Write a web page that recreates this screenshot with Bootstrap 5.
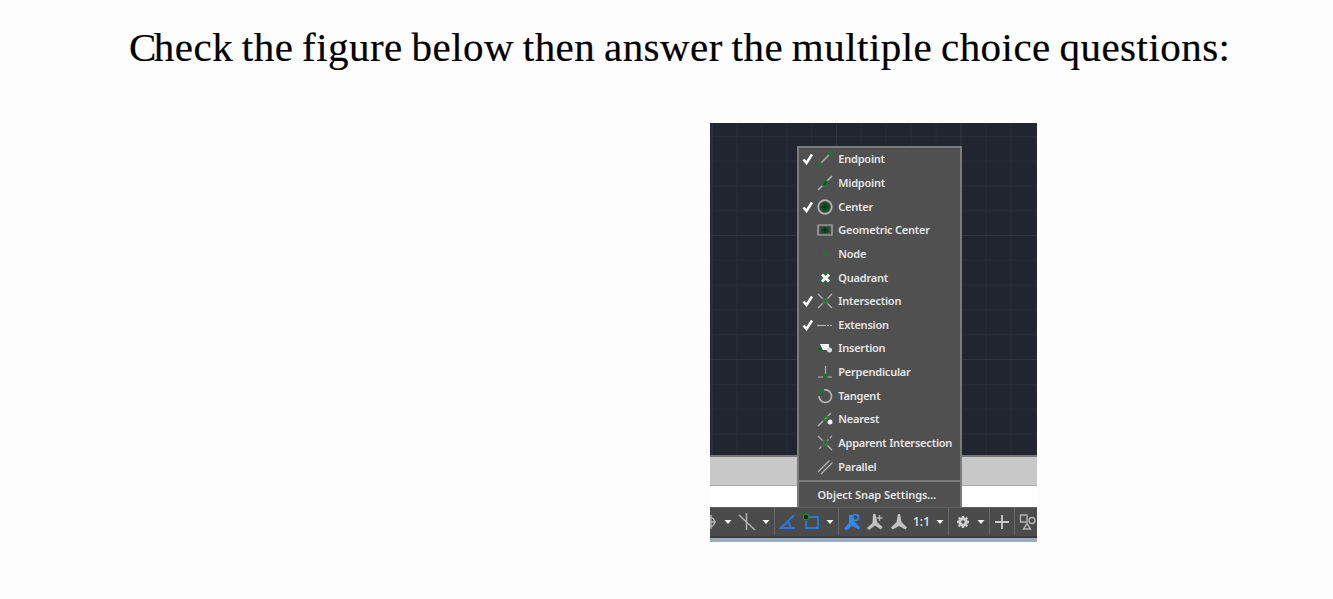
<!DOCTYPE html>
<html lang="en">
<head>
  <meta charset="UTF-8">
  <title>Object Snap Quiz</title>
  <link rel="stylesheet" href="https://cdn.jsdelivr.net/npm/bootstrap@5.3.0/dist/css/bootstrap.min.css">
  <style>
    body {
      background: #fdfdfd;
      overflow: hidden;
    }
    .question {
      font-family: "Liberation Serif", serif;
      font-size: 41px;
      line-height: 50px;
      letter-spacing: 0.47px;
      word-spacing: -2px;
      color: #000;
      padding: 22px 0 0 129px;
      margin-bottom: 51px;
      -webkit-text-stroke: 0.2px #000;
    }
    .question::first-letter {
      letter-spacing: -2.5px;
    }
    .figure-shot {
      width: 327.5px;
      height: 419px;
      margin-left: 709.5px;
      font-family: "Noto Sans", "Open Sans", sans-serif;
    }
    .drawing-area {
      height: 332px;
      background-color: #212530;
      background-image:
        linear-gradient(90deg, #303541 1px, transparent 1px),
        linear-gradient(#303541 1px, transparent 1px),
        linear-gradient(90deg, #272b36 1px, transparent 1px),
        linear-gradient(#272b36 1px, transparent 1px);
      background-size: 124.5px 100%, 100% 124px, 24.9px 100%, 100% 24.8px;
      background-position: 126px 0, 0 112px, 1.5px 0, 0 12.8px;
    }
    .command-strip {
      height: 31px;
      background: #c8c8c8;
      border-top: 2px solid #777;
      border-bottom: 1px solid #aaa;
    }
    .blank-strip {
      height: 21px;
      background: #fff;
    }
    .status-strip {
      height: 31px;
      background: #4b4b4b;
      border-top: 1px solid #606060;
      border-bottom: 2px solid #3a3c40;
    }
    .status-group {
      border-left: 1px solid #6a6665;
      height: 27px;
      flex: none;
    }
    .status-group:first-child {
      border-left: 0;
    }
    .window-edge {
      height: 4px;
      background: #9aabc0;
    }
    .scale-text {
      font-size: 12px;
      line-height: 16px;
      font-weight: 500;
      color: #e8e8e8;
    }
    .snap-menu {
      left: 87px;
      top: 23px;
      width: 165px;
      height: 361px;
      background: #505050;
      border: 2px solid #7b7b7e;
      border-bottom: 0;
      font-size: 11px;
      font-weight: 600;
      color: #e6e6e6;
    }
    #snapList {
      margin-top: -0.5px;
    }
    .snap-item {
      height: 23.65px;
      padding-left: 3.5px;
      white-space: nowrap;
      line-height: 16px;
      letter-spacing: -0.22px;
    }
    .snap-item .tick {
      width: 12px;
      height: 12px;
      margin-right: 3px;
      flex: none;
    }
    .snap-item .glyph {
      width: 16px;
      height: 16px;
      margin-right: 5.3px;
      flex: none;
    }
    .snap-settings {
      border-top: 2px solid #7b7b7e;
      padding: 5px 0 0 19px;
      margin-top: 1.5px;
      line-height: 16px;
      letter-spacing: -0.06px;
      white-space: nowrap;
    }
    svg {
      display: block;
      fill: none;
      flex: none;
    }
    .g { stroke: #b4b4b4; stroke-width: 1.2; }
    .n { stroke: #1f7539; stroke-width: 1.4; }
    .nf { fill: #155029; }
    .w { fill: #f4f4f4; }
    .s { stroke: #b5b5b5; stroke-width: 1.4; }
    .b { stroke: #2878d8; stroke-width: 2; }
  </style>
</head>
<body>
  <h1 class="question fw-normal text-nowrap">Check the figure below then answer the multiple choice questions:</h1>

  <div class="figure-shot position-relative d-flex flex-column overflow-hidden">
    <div class="drawing-area"></div>
    <div class="command-strip"></div>
    <div class="blank-strip"></div>

    <!-- Status bar -->
    <div class="status-strip d-flex">
      <div class="status-group d-flex align-items-center justify-content-between pe-1" style="width:64px">
        <svg width="8" height="18" viewBox="0 0 8 18"><path class="s" d="M0 4.500A4.500 4.500 0 0 1 0 13.500M0 9H6M1 2V16"/></svg>
        <svg width="8" height="6" viewBox="0 0 8 6"><path class="w" d="M.5 1H7.500L4 5Z"/></svg>
        <svg width="18" height="18" viewBox="0 0 18 18"><path class="s" d="M1 2L17 17M8.500 0V17"/></svg>
        <svg width="8" height="6" viewBox="0 0 8 6"><path class="w" d="M.5 1H7.500L4 5Z"/></svg>
      </div>
      <div class="status-group d-flex align-items-center justify-content-between px-1" style="width:64px">
        <svg width="17" height="18" viewBox="0 0 17 18"><path class="b" d="M15 2L2 15H16M8 9Q11 10 11 14"/></svg>
        <svg width="18" height="18" viewBox="0 0 18 18"><path class="b" d="M7 4H16V15H4V8"/><circle cx="4" cy="4" r="2.800" fill="#082f12" stroke="#13903c" stroke-width="1.200"/></svg>
        <svg width="8" height="6" viewBox="0 0 8 6"><path class="w" d="M.5 1H7.500L4 5Z"/></svg>
      </div>
      <div class="status-group d-flex align-items-center justify-content-between px-1" style="width:110px">
        <svg width="18" height="18" viewBox="0 0 18 18"><path fill="#3288ee" d="M6 2H10L11.500 9L17 14L16 16.500L9 13L3 17.500L1 15.500L6 10Z"/><circle cx="12.500" cy="4.500" r="3" stroke="#3288ee" stroke-width="1.600"/></svg>
        <svg width="18" height="18" viewBox="0 0 18 18"><path fill="#c2c2c2" d="M7 1H9.500L11 9L16.500 14L15 16.500L9 12.500L3 17L1 15L6.500 10Z"/><path class="s" d="M13.500 2V8M10.500 5H16.500"/></svg>
        <svg width="18" height="18" viewBox="0 0 18 18"><path fill="#c2c2c2" d="M8 1H10L11.500 9L17 14.500L15.500 16.500L9 13L2.500 16.500L1 14.500L6.500 9Z"/></svg>
        <span class="scale-text">1:1</span>
        <svg width="8" height="6" viewBox="0 0 8 6"><path class="w" d="M.5 1H7.500L4 5Z"/></svg>
      </div>
      <div class="status-group d-flex align-items-center justify-content-between ps-2 pe-1" style="width:41px">
        <svg width="12" height="12" viewBox="0 0 12 12"><circle cx="6" cy="6" r="3.200" stroke="#d0d0d0" stroke-width="3"/><path stroke="#d0d0d0" stroke-width="2.400" d="M6 0V2M6 10V12M0 6H2M10 6H12M1.700 1.700L3 3M9 9L10.300 10.300M1.700 10.300L3 9M9 3L10.300 1.700"/></svg>
        <svg width="8" height="6" viewBox="0 0 8 6"><path class="w" d="M.5 1H7.500L4 5Z"/></svg>
      </div>
      <div class="status-group d-flex align-items-center justify-content-center" style="width:25px">
        <svg width="14" height="14" viewBox="0 0 14 14"><path stroke="#cacaca" stroke-width="1.800" d="M7 0V14M0 7H14"/></svg>
      </div>
      <div class="status-group d-flex align-items-center ps-1" style="width:24px">
        <svg width="18" height="18" viewBox="0 0 18 18"><path class="s" d="M1.500 2H8V9H1.500ZM8 10.500L11.500 16H4.500Z"/><circle class="s" cx="13" cy="7.500" r="3"/></svg>
      </div>
    </div>
    <div class="window-edge"></div>

    <!-- Object snap menu -->
    <div class="snap-menu position-absolute">
      <div id="snapList"></div>
      <div class="snap-settings">Object Snap Settings...</div>
    </div>
  </div>

  <script src="https://cdn.jsdelivr.net/npm/bootstrap@5.3.0/dist/js/bootstrap.bundle.min.js"></script>
  <script>
    const snapList = document.getElementById('snapList');

    const snaps = [
      { name: 'Endpoint', on: true, icon: '<path class="g" d="M4 12L12 4"/><circle class="n" cx="2.500" cy="13.500" r="1.700"/><circle class="n" cx="13.500" cy="2.500" r="1.700"/>' },
      { name: 'Midpoint', icon: '<path class="g" style="stroke-width:1.600" d="M1 15L15 1"/><path class="n nf" d="M5 10L8 5L11 7L8 11Z"/>' },
      { name: 'Center', on: true, icon: '<circle class="nf" cx="8" cy="8" r="5"/><circle class="g" style="stroke-width:1.700" cx="8" cy="8" r="6.800"/><path stroke="#0b2412" d="M8 5V11M5 8H11"/>' },
      { name: 'Geometric Center', icon: '<path class="g" d="M1 3H15V13H1Z"/><path class="nf" d="M3.500 5H12.500V11H3.500Z"/><path stroke="#0b2412" d="M8 5V11M5 8H11"/>' },
      { name: 'Node', icon: '<circle class="n" cx="8.500" cy="7" r="2"/>' },
      { name: 'Quadrant', icon: '<circle class="n" cx="8.500" cy="8" r="5.500" stroke-dasharray="4.300 4.300" stroke-dashoffset="2.150"/><path stroke="#fff" stroke-width="3" d="M5 4.500L12 11.500M12 4.500L5 11.500"/>' },
      { name: 'Intersection', on: true, icon: '<path class="g" d="M1 1L15 15M15 1L1 15"/><path class="n" d="M5.500 5.500L10.500 10.500M10.500 5.500L5.500 10.500"/>' },
      { name: 'Extension', on: true, icon: '<path class="g" d="M0 8.500H7"/><path class="g" stroke-dasharray="2 1" d="M7 8.500H16"/>' },
      { name: 'Insertion', icon: '<circle class="n nf" cx="2.500" cy="9" r="2"/><path class="w" d="M3 4H12V8L10 10H6Z"/><circle cx="12.500" cy="10" r="2.500" fill="#ddd"/>' },
      { name: 'Perpendicular', icon: '<path class="g" d="M8.500 2V10M1 13H6M10 13H15"/><path class="n" d="M7 10.500H10V13.500H7Z"/>' },
      { name: 'Tangent', icon: '<path class="g" style="stroke-width:1.700" d="M7 2A6.300 6.300 0 1 1 2 8"/><circle class="n" cx="3.500" cy="4" r="1.800"/>' },
      { name: 'Nearest', icon: '<path class="g" d="M1 15L14 2"/><path class="n" d="M6 9L8 5L11 6L9 9Z"/><circle class="w" cx="13" cy="11" r="2.500"/>' },
      { name: 'Apparent Intersection', icon: '<path class="g" d="M1 1L15 15"/><path class="g" stroke-dasharray="3 2" d="M15 1L1 15"/><path class="n" d="M5.500 5.500L10.500 10.500M10.500 5.500L5.500 10.500"/>' },
      { name: 'Parallel', icon: '<path class="g" d="M1 13L12.500 1.500M4 15L15.500 3.500"/>' }
    ];

    snaps.forEach(snap => {
      const row = document.createElement('div');
      row.className = 'snap-item d-flex align-items-center';
      row.innerHTML = `
        <svg class="tick" viewBox="0 0 12 12">${snap.on ? '<path stroke="#fff" stroke-width="2.500" d="M1.500 6.500L4.500 10L10 1.500"/>' : ''}</svg>
        <svg class="glyph" viewBox="0 0 16 16">${snap.icon}</svg>
        <span>${snap.name}</span>`;
      snapList.appendChild(row);
    });
  </script>
</body>
</html>
